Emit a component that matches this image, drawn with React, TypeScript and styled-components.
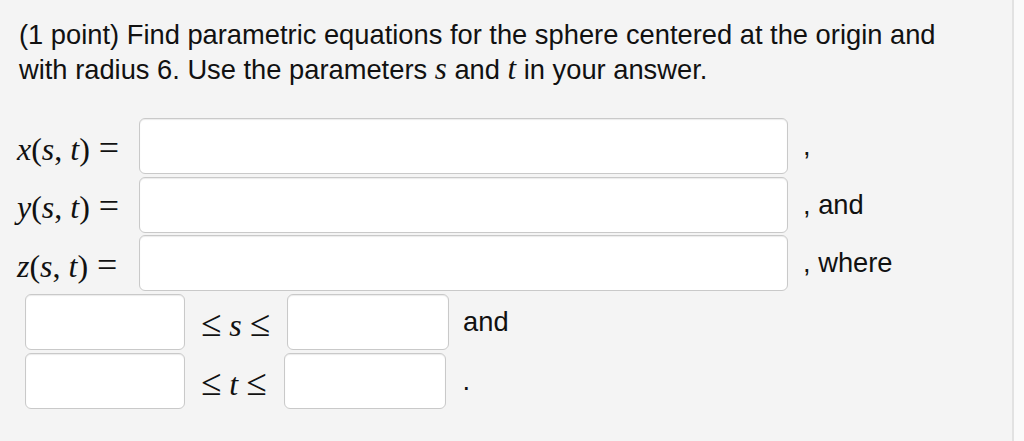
import { Fragment } from "react"
import styled, { createGlobalStyle } from "styled-components"

const GlobalStyle = createGlobalStyle`
    html, body {
        margin: 0;
        padding: 0;
        background: #fafafa;
    }
`

const Panel = styled.div`
    box-sizing: border-box;
    width: 1014px;
    height: 441px;
    padding: 18px 19px 0 19px;
    background-color: #f4f4f4;
    border-right: 2px solid #e2e2e2;
    font-family: "Liberation Sans", Arial, sans-serif;
    font-size: 27.3px;
    color: #111;
`

const Prompt = styled.p`
    margin: 0 0 31px 0;
    line-height: 34px;
    white-space: nowrap;
`

const MathVar = styled.span`
    font-family: "Liberation Serif", "Times New Roman", serif;
    font-style: italic;
    font-size: 31px;
`

const EquationGrid = styled.div`
    display: grid;
    grid-template-columns: 122px 649px auto;
    row-gap: 2.5px;
    margin-left: -2px;
    align-items: center;
`

const Label = styled.span`
    display: flex;
    align-items: baseline;
    font-family: "Liberation Serif", "Times New Roman", serif;
    font-size: 32px;
    white-space: nowrap;
    line-height: 1;
    padding-top: 3px;

    i {
        font-style: italic;
    }
`

const Equals = styled.span`
    margin-left: 9px;
    font-size: 36px;
    font-weight: 500;
`

const AnswerBox = styled.input<{ $width?: number }>`
    box-sizing: border-box;
    width: ${(props) => (props.$width ? `${props.$width}px` : "100%")};
    height: 56px;
    margin: 0;
    padding: 6px 12px;
    background-color: #fff;
    border: 1px solid #c9c9c9;
    border-radius: 6px;
    box-shadow: inset 0 1px 1px rgba(0, 0, 0, 0.08);
    font-size: 20px;
    outline: none;
`

const Suffix = styled.span<{ $gap?: number }>`
    padding-left: ${(props) => props.$gap ?? 15}px;
    white-space: nowrap;
`

const RangeRows = styled.div`
    display: flex;
    flex-direction: column;
    gap: 3px;
    margin-top: 2.5px;
    margin-left: 6px;
`

const RangeRow = styled.div`
    display: flex;
    align-items: center;
`

const Between = styled.span`
    display: inline-flex;
    align-items: baseline;
    gap: 8px;
    padding: 4px 17px 0 16px;
    font-family: "Liberation Serif", "Times New Roman", serif;
    font-size: 32px;
    line-height: 1;

    i {
        font-style: italic;
    }
`

const Relation = styled.span`
    font-size: 37px;
`

const equations = [
    { name: "x", suffix: "," },
    { name: "y", suffix: ", and" },
    { name: "z", suffix: ", where" },
]

const ranges = [
    { name: "s", suffix: "and", gap: 14 },
    { name: "t", suffix: ".", gap: 17 },
]

function App() {
    return (
        <>
            <GlobalStyle />
            <Panel>
                <Prompt>
                    (1 point) Find parametric equations for the sphere centered
                    at the origin and
                    <br />
                    with radius 6. Use the parameters <MathVar>s</MathVar> and{" "}
                    <MathVar>t</MathVar> in your answer.
                </Prompt>
                <EquationGrid>
                    {equations.map((eq) => (
                        <Fragment key={eq.name}>
                            <Label>
                                <i>{eq.name}</i>(<i>s</i>,&nbsp;<i>t</i>)
                                <Equals>=</Equals>
                            </Label>
                            <AnswerBox type="text" />
                            <Suffix>{eq.suffix}</Suffix>
                        </Fragment>
                    ))}
                </EquationGrid>
                <RangeRows>
                    {ranges.map((r) => (
                        <RangeRow key={r.name}>
                            <AnswerBox type="text" $width={160} />
                            <Between>
                                <Relation>≤</Relation>
                                <i>{r.name}</i>
                                <Relation>≤</Relation>
                            </Between>
                            <AnswerBox type="text" $width={162} />
                            <Suffix $gap={r.gap}>{r.suffix}</Suffix>
                        </RangeRow>
                    ))}
                </RangeRows>
            </Panel>
        </>
    )
}

export default App
